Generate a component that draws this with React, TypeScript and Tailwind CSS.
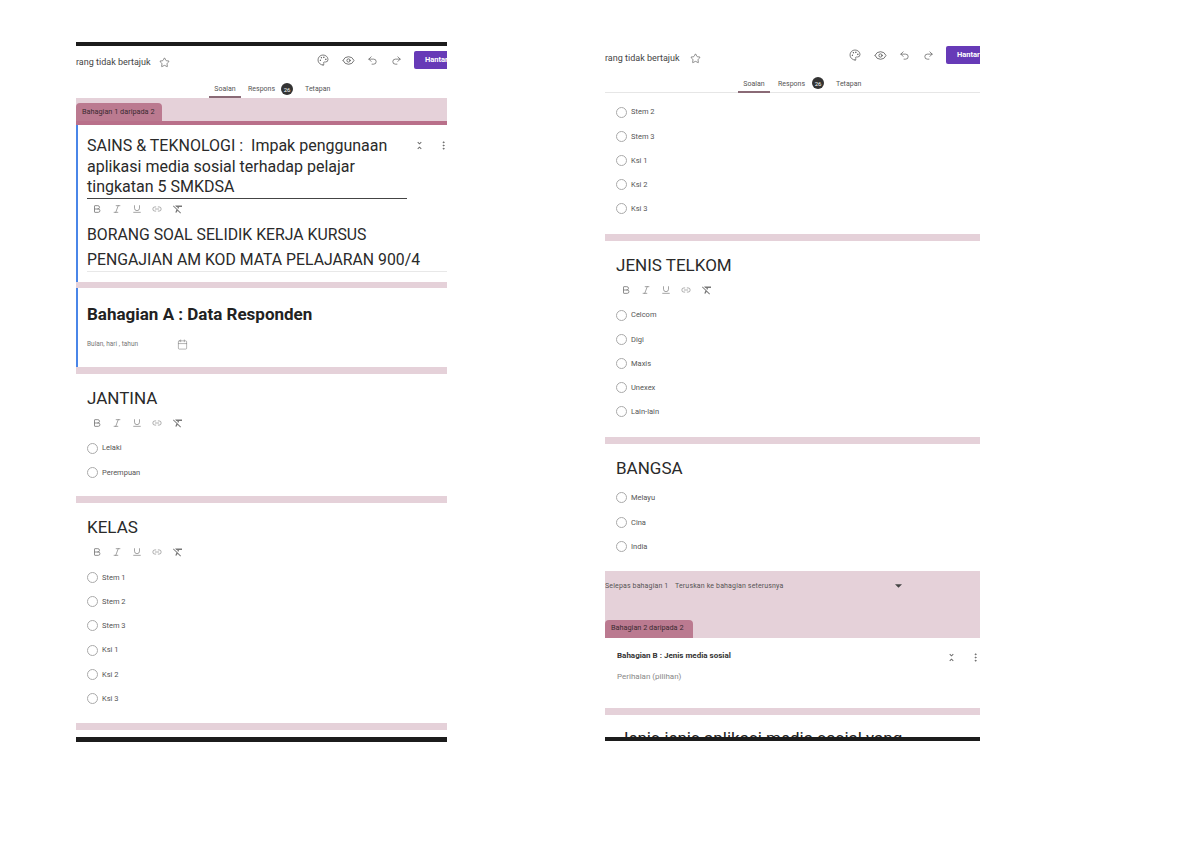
import { Palette, Eye, Undo2, Redo2, Star, Calendar, Bold, Italic, Underline, Link2, EllipsisVertical } from "lucide-react";

const font = { fontFamily: "Roboto, 'Liberation Sans', sans-serif" };

function ClearFormat() {
  return (
    <svg viewBox="0 0 24 24" className="size-[12px]" fill="currentColor">
      <path d="M3.27 5L2 6.27l6.97 6.97L6.5 19h3l1.57-3.66L16.73 21 18 19.73 3.55 5.27 3.27 5zM6 5v.18L8.82 8h2.4l-.72 1.68 2.1 2.1L14.21 8H20V5H6z" />
    </svg>
  );
}

function UnfoldLess() {
  return (
    <svg viewBox="0 0 24 24" className="size-[11px]" fill="currentColor">
      <path d="M7.41 18.59L8.83 20 12 16.83 15.17 20l1.41-1.41L12 14l-4.59 4.59zm9.18-13.18L15.17 4 12 7.17 8.83 4 7.41 5.41 12 10l4.59-4.59z" />
    </svg>
  );
}

function Header({ right }: { right?: boolean }) {
  return (
    <div className={right ? "h-[47px] shrink-0 border-b border-[#e6e6e6]" : "h-[52px] shrink-0 pt-[5px]"}>
      <div className="flex h-[18px] items-center">
        <span className={`${right ? "mt-[7px]" : "mt-[5px]"} w-[80px] shrink-0 whitespace-nowrap text-[9px] text-[#444]`}>rang tidak bertajuk</span>
        <Star className={`${right ? "mt-[7px] ml-[5px]" : "mt-[5px] ml-[3px]"} size-[11px] shrink-0 text-[#555]`} strokeWidth={1.4} />
        <div className={`${right ? "ml-[148px]" : "ml-[147px]"} flex w-[85px] shrink-0 items-center justify-between text-[#555]`}>
          <Palette className="size-[12px]" strokeWidth={1.5} />
          <Eye className="size-[13px]" strokeWidth={1.5} />
          <Undo2 className="size-[11px]" strokeWidth={1.5} />
          <Redo2 className="size-[11px]" strokeWidth={1.5} />
        </div>
        <div className="ml-[12px] flex h-[18px] w-[60px] shrink-0 items-center rounded-[2px] bg-[#673ab7] pl-[11px] text-[7.5px] font-bold text-white">Hantar</div>
      </div>
      <div className="flex h-[29px] items-end pl-[133px] text-[7px] text-[#555]">
        <div className="flex h-[20px] w-[32px] shrink-0 items-start justify-center border-b-2 border-[#8a6a76] pt-[6px]">Soalan</div>
        <div className={`${right ? "ml-[8px]" : "ml-[7px]"} flex h-[20px] items-start pt-[6px]`}>Respons</div>
        <div className={`mb-[2px] ${right ? "ml-[7px] pt-[4px]" : "ml-[6px] pt-[5px]"} flex h-[18px] items-start`}>
          <span className="flex size-[12px] items-center justify-center rounded-full bg-[#333] text-[6px] text-white">26</span>
        </div>
        <div className="ml-[12px] flex h-[20px] items-start pt-[6px]">Tetapan</div>
      </div>
    </div>
  );
}

function Toolbar() {
  return (
    <div className="flex h-[14px] items-center gap-[10px] pl-[5px] text-[#777]">
      <Bold className="size-[10px]" strokeWidth={2} />
      <Italic className="size-[10px]" strokeWidth={1.6} />
      <Underline className="size-[10px]" strokeWidth={1.6} />
      <Link2 className="size-[10px]" strokeWidth={1.4} />
      <ClearFormat />
    </div>
  );
}

function Radio({ label }: { label: string }) {
  return (
    <div className="flex h-[24.2px] items-center">
      <span className="size-[11px] shrink-0 rounded-full border border-[#aaa]" />
      <span className="ml-[4px] text-[7.5px] text-[#555]">{label}</span>
    </div>
  );
}

function Question({ title, options, toolbar = true, loose }: { title?: string; options: string[]; toolbar?: boolean; loose?: boolean }) {
  return (
    <div className={`${loose ? "pb-[13px]" : "pb-[12px]"} bg-white pl-[11px]`}>
      {title && (
        <>
          <div className="pt-[14px] text-[17px] leading-[20px] text-[#2a2a2a]">{title}</div>
          {toolbar && <div className="mt-[8px]"><Toolbar /></div>}
        </>
      )}
      <div className={title ? (toolbar ? "pt-[6px]" : "pt-[8px]") : "pt-[7px]"}>
        {options.map((o) => <Radio key={o} label={o} />)}
      </div>
    </div>
  );
}

const Band = () => <div className="h-[7px] shrink-0 bg-[#e5d1d9]" />;

function SideIcons({ cls = "" }: { cls?: string }) {
  return (
    <div className={`flex shrink-0 items-center gap-[13px] text-[#666] ${cls}`}>
      <UnfoldLess />
      <EllipsisVertical className="size-[11px]" strokeWidth={2} />
    </div>
  );
}

function Left() {
  return (
    <div className="flex h-[700px] w-[371px] shrink-0 flex-col overflow-hidden bg-white" style={font}>
      <div className="h-[4px] shrink-0 bg-[#1c1c1c]" />
      <Header />
      <div className="h-[23px] shrink-0 bg-[#e5d1d9] pt-[5px]">
        <div className="flex h-[18px] w-[86px] items-center whitespace-nowrap rounded-t-[4px] bg-[#bb7a90] pl-[6px] text-[7.3px] text-[#3a2a30]">Bahagian 1 daripada 2</div>
      </div>
      <div className="h-[4px] shrink-0 bg-[#b9708a]" />
      <div className="h-[157px] shrink-0 border-l-2 border-[#4a86e8] bg-white pl-[9px] pt-[11px]">
        <div className="flex items-start">
          <div className="w-[320px] shrink-0 border-b border-[#444] text-[16px] leading-[20.5px] text-[#2a2a2a]">
            SAINS &amp; TEKNOLOGI :&nbsp; Impak penggunaan aplikasi media sosial terhadap pelajar tingkatan 5 SMKDSA
          </div>
          <SideIcons cls="ml-[7px] mt-[4px]" />
        </div>
        <div className="mt-[3px]"><Toolbar /></div>
        <div className="mt-[6px] h-[49px] text-[15.8px] leading-[25px] text-[#2a2a2a]">
          <div>BORANG SOAL SELIDIK KERJA KURSUS</div>
          <div className="whitespace-nowrap">PENGAJIAN AM KOD MATA PELAJARAN 900/4</div>
        </div>
        <div className="h-px bg-[#e8e8e8]" />
      </div>
      <div className="h-[6px] shrink-0 bg-[#e5d1d9]" />
      <div className="h-[79px] shrink-0 border-l-2 border-[#4a86e8] bg-white pl-[9px] pt-[16px]">
        <div className="text-[17px] font-bold leading-[20px] text-[#222]">Bahagian A : Data Responden</div>
        <div className="mt-[14px] flex h-[12px] items-center text-[6.5px] text-[#777]">
          <span className="mt-[2px] w-[90px] shrink-0">Bulan, hari , tahun</span>
          <Calendar className="size-[11px] text-[#777]" strokeWidth={1.2} />
        </div>
      </div>
      <Band />
      <Question title="JANTINA" options={["Lelaki", "Perempuan"]} />
      <Band />
      <Question title="KELAS" options={["Stem 1", "Stem 2", "Stem 3", "Ksi 1", "Ksi 2", "Ksi 3"]} />
      <Band />
      <div className="flex-1 bg-white" />
      <div className="h-[5px] shrink-0 bg-[#1c1c1c]" />
    </div>
  );
}

function Right() {
  return (
    <div className="flex h-[699px] w-[375px] shrink-0 flex-col overflow-hidden bg-white" style={font}>
      <div className="h-[4px] shrink-0" />
      <Header right />
      <Question loose options={["Stem 2", "Stem 3", "Ksi 1", "Ksi 2", "Ksi 3"]} />
      <Band />
      <Question loose title="JENIS TELKOM" options={["Celcom", "Digi", "Maxis", "Unexex", "Lain-lain"]} />
      <Band />
      <Question loose title="BANGSA" toolbar={false} options={["Melayu", "Cina", "India"]} />
      <div className="h-[66.4px] shrink-0 bg-[#e5d1d9]">
        <div className="flex h-[29px] items-center whitespace-nowrap text-[7px] tracking-[0.15px] text-[#555]">
          <span className="w-[70px] shrink-0">Selepas bahagian 1</span>
          <span className="w-[220px] shrink-0">Teruskan ke bahagian seterusnya</span>
          <svg viewBox="0 0 8 4" className="h-[4px] w-[7px] text-[#444]" fill="currentColor"><path d="M0 0h8L4 4z" /></svg>
        </div>
        <div className="mt-[19.4px] flex h-[18px] w-[88px] items-center whitespace-nowrap rounded-t-[4px] bg-[#bb7a90] pl-[6px] text-[7.3px] text-[#3a2a30]">Bahagian 2 daripada 2</div>
      </div>
      <div className="h-[70px] shrink-0 bg-white pl-[12px] pt-[12px]">
        <div className="flex items-start">
          <div className="w-[329px] shrink-0 text-[8px] font-bold leading-[12px] text-[#333]">Bahagian B : Jenis media sosial</div>
          <SideIcons cls="mt-[2px]" />
        </div>
        <div className="mt-[8px] text-[8px] leading-[12px] text-[#888]">Perihalan (pilihan)</div>
      </div>
      <Band />
      <div className="h-[22px] shrink-0 overflow-hidden bg-white pl-[14px] pt-[13px] text-[17px] leading-[20px] whitespace-nowrap text-[#222]">Jenis-jenis aplikasi media sosial yang</div>
      <div className="h-[4px] shrink-0 bg-[#1c1c1c]" />
    </div>
  );
}

export default function App() {
  return (
    <div className="flex h-[849px] w-[1200px] gap-[158px] bg-white pl-[76px] pt-[42px]">
      <Left />
      <Right />
    </div>
  );
}
